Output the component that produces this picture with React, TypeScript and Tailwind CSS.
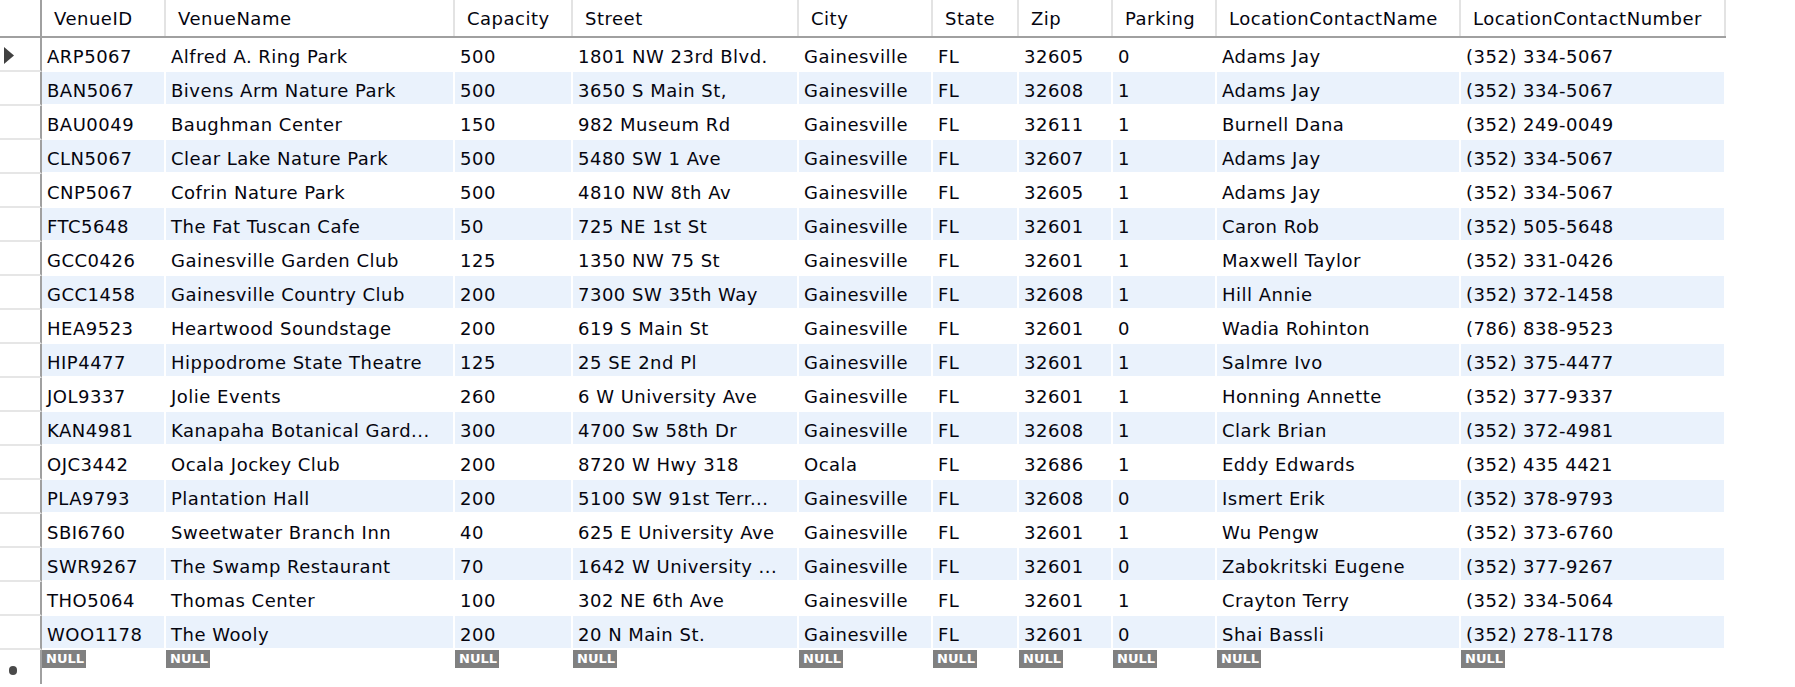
import React from "react";

const cols = [
  { name: "VenueID", w: "w-[122px]" },
  { name: "VenueName", w: "w-[287px]" },
  { name: "Capacity", w: "w-[116px]" },
  { name: "Street", w: "w-[224px]" },
  { name: "City", w: "w-[132px]" },
  { name: "State", w: "w-[84px]" },
  { name: "Zip", w: "w-[92px]" },
  { name: "Parking", w: "w-[102px]" },
  { name: "LocationContactName", w: "w-[242px]" },
  { name: "LocationContactNumber", w: "w-[263px]" },
];

const rows: string[][] = [
  ["ARP5067", "Alfred A. Ring Park", "500", "1801 NW 23rd Blvd.", "Gainesville", "FL", "32605", "0", "Adams Jay", "(352) 334-5067"],
  ["BAN5067", "Bivens Arm Nature Park", "500", "3650 S Main St,", "Gainesville", "FL", "32608", "1", "Adams Jay", "(352) 334-5067"],
  ["BAU0049", "Baughman Center", "150", "982 Museum Rd", "Gainesville", "FL", "32611", "1", "Burnell Dana", "(352) 249-0049"],
  ["CLN5067", "Clear Lake Nature Park", "500", "5480 SW 1 Ave", "Gainesville", "FL", "32607", "1", "Adams Jay", "(352) 334-5067"],
  ["CNP5067", "Cofrin Nature Park", "500", "4810 NW 8th Av", "Gainesville", "FL", "32605", "1", "Adams Jay", "(352) 334-5067"],
  ["FTC5648", "The Fat Tuscan Cafe", "50", "725 NE 1st St", "Gainesville", "FL", "32601", "1", "Caron Rob", "(352) 505-5648"],
  ["GCC0426", "Gainesville Garden Club", "125", "1350 NW 75 St", "Gainesville", "FL", "32601", "1", "Maxwell Taylor", "(352) 331-0426"],
  ["GCC1458", "Gainesville Country Club", "200", "7300 SW 35th Way", "Gainesville", "FL", "32608", "1", "Hill Annie", "(352) 372-1458"],
  ["HEA9523", "Heartwood Soundstage", "200", "619 S Main St", "Gainesville", "FL", "32601", "0", "Wadia Rohinton", "(786) 838-9523"],
  ["HIP4477", "Hippodrome State Theatre", "125", "25 SE 2nd Pl", "Gainesville", "FL", "32601", "1", "Salmre Ivo", "(352) 375-4477"],
  ["JOL9337", "Jolie Events", "260", "6 W University Ave", "Gainesville", "FL", "32601", "1", "Honning Annette", "(352) 377-9337"],
  ["KAN4981", "Kanapaha Botanical Gard...", "300", "4700 Sw 58th Dr", "Gainesville", "FL", "32608", "1", "Clark Brian", "(352) 372-4981"],
  ["OJC3442", "Ocala Jockey Club", "200", "8720 W Hwy 318", "Ocala", "FL", "32686", "1", "Eddy Edwards", "(352) 435 4421"],
  ["PLA9793", "Plantation Hall", "200", "5100 SW 91st Terr...", "Gainesville", "FL", "32608", "0", "Ismert Erik", "(352) 378-9793"],
  ["SBI6760", "Sweetwater Branch Inn", "40", "625 E University Ave", "Gainesville", "FL", "32601", "1", "Wu Pengw", "(352) 373-6760"],
  ["SWR9267", "The Swamp Restaurant", "70", "1642 W University ...", "Gainesville", "FL", "32601", "0", "Zabokritski Eugene", "(352) 377-9267"],
  ["THO5064", "Thomas Center", "100", "302 NE 6th Ave", "Gainesville", "FL", "32601", "1", "Crayton Terry", "(352) 334-5064"],
  ["WOO1178", "The Wooly", "200", "20 N Main St.", "Gainesville", "FL", "32601", "0", "Shai Bassli", "(352) 278-1178"],
];

const font = "font-['DejaVu_Sans',sans-serif] text-[18px] tracking-[0.5px] text-[#05050f]";

export default function App() {
  return (
    <div className={`w-[1795px] h-[687px] bg-white overflow-hidden ${font}`}>
      {/* header */}
      <div className="flex h-[38px] w-[1726px] border-b-2 border-[#a0a0a0]">
        <div className="w-[42px] shrink-0 border-r-2 border-[#a0a0a0]" />
        {cols.map((c) => (
          <div key={c.name} className="flex shrink-0">
            <div className={`${c.w} h-[36px] pl-[12px] pt-[8px] leading-[21px] whitespace-nowrap overflow-hidden`}>
              {c.name}
            </div>
            <div className="w-[2px] h-[36px] bg-[#e3e3e3]" />
          </div>
        ))}
      </div>

      {/* data rows */}
      {rows.map((r, i) => {
        const band = i % 2 === 1 ? "bg-[#eaf2fc]" : "bg-white";
        return (
          <div key={i} className="flex h-[34px]">
            <div className="w-[42px] h-[34px] shrink-0 border-r-2 border-r-[#a0a0a0] border-b-2 border-b-[#e6e6e6] flex items-center">
              {i === 0 && (
                <svg width="11" height="17" viewBox="0 0 11 17" className="ml-[4px] mt-[2px]">
                  <path d="M0 0 L10 8.5 L0 17 Z" fill="#404040" />
                </svg>
              )}
            </div>
            {cols.map((c, j) => (
              <div
                key={j}
                className={`${c.w} h-[32px] mr-[2px] shrink-0 ${band} pl-[5px] pt-[8px] leading-[21px] whitespace-nowrap overflow-hidden`}
              >
                {r[j]}
              </div>
            ))}
          </div>
        );
      })}

      {/* NULL row */}
      <div className="flex h-[34px]">
        <div className="w-[42px] h-[34px] shrink-0 border-r-2 border-r-[#a0a0a0] flex items-end pb-[9px] pl-[9px]">
          <div className="w-[8px] h-[9px] rounded-full bg-[#4a4a4a]" />
        </div>
        {cols.map((c, j) => (
          <div key={j} className={`${c.w} mr-[2px] shrink-0`}>
            <div className="w-[44px] h-[18px] bg-[#808080] text-white font-['DejaVu_Sans',sans-serif] font-bold text-[13px] tracking-[0px] leading-[18px] pl-[4px]">
              NULL
            </div>
          </div>
        ))}
      </div>
    </div>
  );
}
